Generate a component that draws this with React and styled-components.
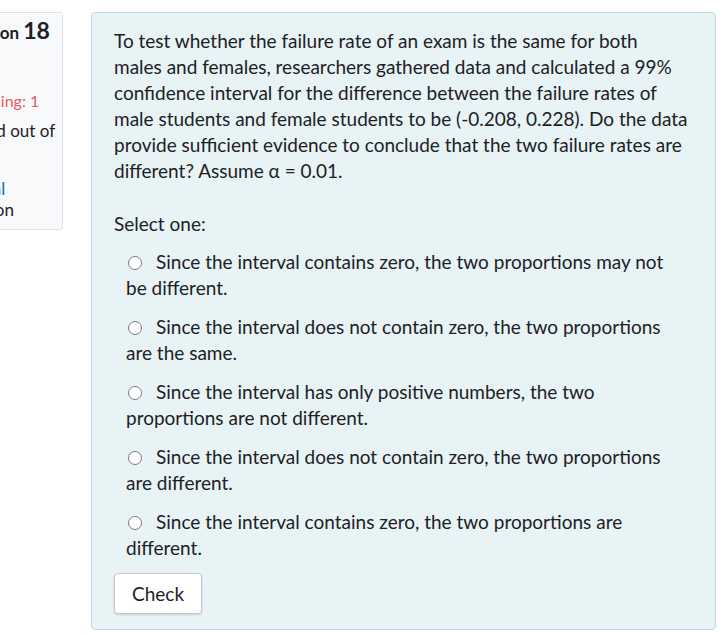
import React from "react";
import styled, { createGlobalStyle } from "styled-components";

const Global = createGlobalStyle`
  html, body { margin: 0; padding: 0; background: #fff; overflow: hidden; }
  body { font-family: "Lato", "Open Sans", sans-serif; color: #1d2125; }
`;

const Page = styled.div`
  display: flex;
  align-items: flex-start;
  gap: 28px;
  padding-top: 12px;
  width: 716px;
`;

const Info = styled.div`
  flex: 0 0 auto;
  width: 125px;
  margin-left: -62px;
  box-sizing: border-box;
  height: 218px;
  padding: 4px 10px;
  background: #f8f9fa;
  border: 1px solid #dee2e6;
  border-radius: 3px;
  font-size: 17px;
  line-height: 21px;
`;

const QNo = styled.h3`
  margin: 0 0 44px;
  font-size: 17px;
  font-weight: 700;
  color: #1d2125;
  line-height: 26px;
  white-space: nowrap;
`;

const Num = styled.span`
  font-size: 23px;
`;

const InfoLine = styled.div`
  color: ${(p) => p.color || "#1d2125"};
  font-size: ${(p) => p.size || 17}px;
  margin-bottom: ${(p) => p.mb || 0}px;
  white-space: nowrap;
`;

const Card = styled.div`
  flex: 1 1 auto;
  box-sizing: border-box;
  padding: 15px 22px 15px;
  background: #e7f3f5;
  border: 1px solid #b8dce2;
  border-radius: 4px;
  font-size: 19px;
  line-height: 26px;
`;

const QText = styled.p`
  margin: 0 0 27px;
  max-width: 574.5px;
`;

const Prompt = styled.div`
  margin-bottom: 12px;
`;

const Options = styled.div`
  display: flex;
  flex-direction: column;
  gap: 13px;
  padding-left: 12px;
  margin-right: 18px;
  margin-bottom: 12px;
`;

const Option = styled.label`
  display: block;
`;

const Radio = styled.span`
  display: inline-block;
  box-sizing: border-box;
  width: 14px;
  height: 14px;
  border: 1px solid #7a7a7a;
  border-radius: 50%;
  background: #fff;
  margin: 0 14px 0 2px;
  vertical-align: -1px;
`;

const Button = styled.button`
  display: block;
  font-family: inherit;
  font-size: 19px;
  color: #1d2125;
  background: #fff;
  border: 1px solid #c8c8c8;
  border-radius: 4px;
  box-shadow: 0 1px 2px rgba(0,0,0,0.15);
  height: 41px;
  padding: 0 17px;
`;

const options = [
  "Since the interval contains zero, the two proportions may not be different.",
  "Since the interval does not contain zero, the two proportions are the same.",
  "Since the interval has only positive numbers, the two proportions are not different.",
  "Since the interval does not contain zero, the two proportions are different.",
  "Since the interval contains zero, the two proportions are different.",
];

export default function App() {
  return (
    <>
      <Global />
      <Page>
        <Info>
          <QNo>Question <Num>18</Num></QNo>
          <InfoLine color="#e25c5c" size={16} mb={9}>Remaining: 1</InfoLine>
          <InfoLine>Marked out of</InfoLine>
          <InfoLine mb={16}>1.00</InfoLine>
          <InfoLine color="#0f6cbf">Tutorial</InfoLine>
          <InfoLine>question</InfoLine>
        </Info>
        <Card>
          <QText>
            To test whether the failure rate of an exam is the same for both males and
            females, researchers gathered data and calculated a 99% confidence interval
            for the difference between the failure rates of male students and female
            students to be (-0.208, 0.228). Do the data provide sufficient evidence to
            conclude that the two failure rates are different? Assume α = 0.01.
          </QText>
          <Prompt>Select one:</Prompt>
          <Options>
            {options.map((o) => (
              <Option key={o}>
                <Radio />
                {o}
              </Option>
            ))}
          </Options>
          <Button>Check</Button>
        </Card>
      </Page>
    </>
  );
}
